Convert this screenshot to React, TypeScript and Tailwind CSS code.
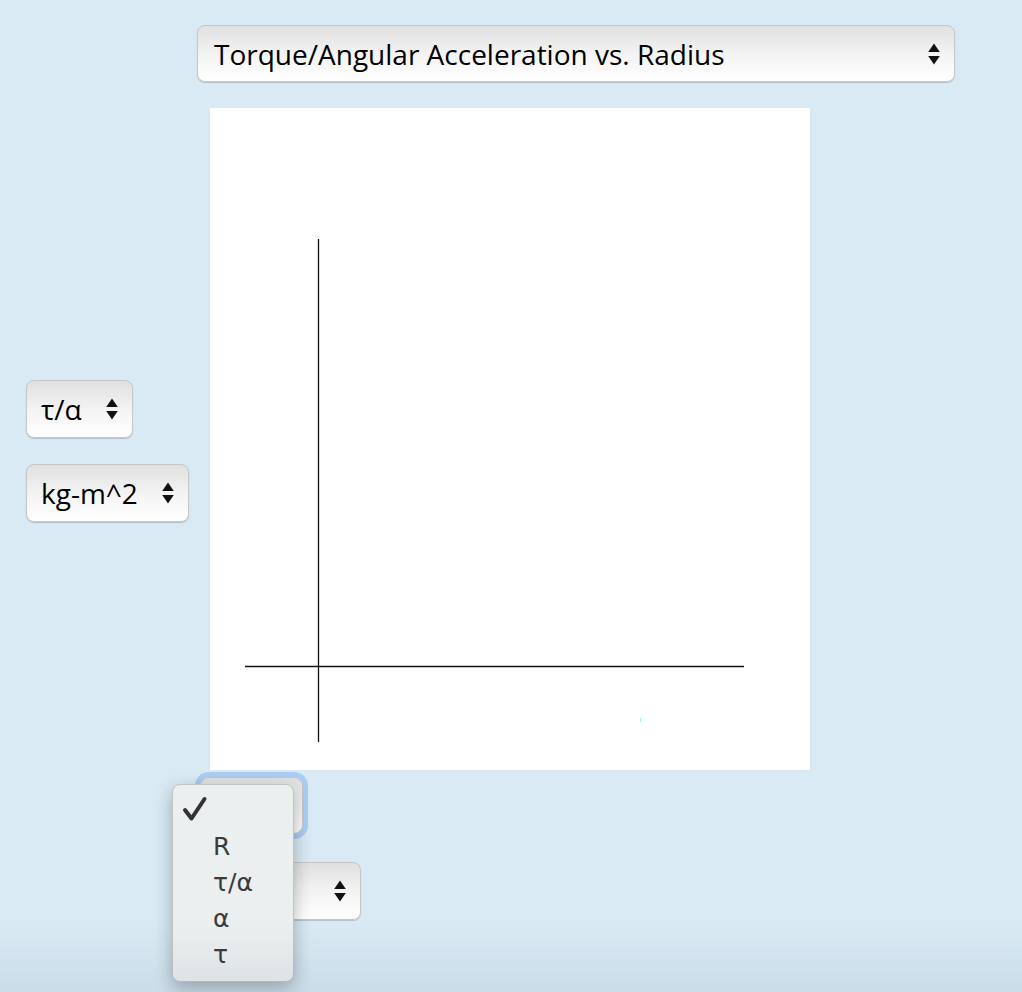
import React from "react";

function Arrows({ className = "" }: { className?: string }) {
  return (
    <svg width="12" height="22" viewBox="0 0 12 22" className={className}>
      <polygon points="6,0.5 11.8,9 0.2,9" fill="#111" />
      <polygon points="0.2,13 11.8,13 6,21.5" fill="#111" />
    </svg>
  );
}

function Select({
  label,
  className = "",
  textClass = "pl-[14px]",
}: {
  label?: string;
  className?: string;
  textClass?: string;
}) {
  return (
    <div
      className={
        "flex shrink-0 items-center justify-between rounded-[8px] border border-[#c6c6c6] bg-gradient-to-b from-[#e0e0e0] via-[#f3f3f3] to-white shadow-[0_1px_1px_rgba(0,0,0,0.18)] pr-[14px] " +
        className
      }
    >
      <span className={"text-[28px] leading-none text-black " + textClass}>{label}</span>
      <Arrows />
    </div>
  );
}

export default function App() {
  return (
    <div className="relative min-h-[992px] w-[1022px] overflow-hidden bg-[#d9eaf4] font-['Open_Sans',sans-serif]">
      {/* chart picker */}
      <div className="pl-[197px] pt-[25px]">
        <Select
          label="Torque/Angular Acceleration vs. Radius"
          className="h-[57px] w-[758px]"
          textClass="pl-[16px]"
        />
      </div>

      <div className="mt-[26px] flex">
        {/* y-axis controls */}
        <div className="flex w-[210px] shrink-0 flex-col items-start gap-[26px] pl-[26px] pt-[272px]">
          <Select label="τ/α" className="h-[58px] w-[107px]" />
          <Select label="kg-m^2" className="h-[58px] w-[163px]" />
        </div>

        {/* plot area */}
        <div className="h-[662px] w-[600px] shrink-0 bg-white">
          <svg width="600" height="662" viewBox="0 0 600 662">
            <line x1="108.5" y1="131" x2="108.5" y2="634" stroke="#111" strokeWidth="1.3" />
            <line x1="35" y1="558.5" x2="534" y2="558.5" stroke="#111" strokeWidth="1.3" />
            <rect x="430" y="610" width="1.2" height="4" fill="#7fffff" />
          </svg>
        </div>
      </div>

      {/* x-axis controls */}
      <div className="flex flex-col items-start pl-[200px] pt-[7px]">
        <div className="h-[57px] w-[103px] rounded-[9px] border border-[#c6c6c6] bg-gradient-to-b from-[#e0e0e0] via-[#f2f2f2] to-white ring-[5px] ring-[#a9cdf3]" />
        <Select className="ml-[-2px] mt-[28px] h-[58px] w-[163px]" />
      </div>

      {/* open option menu */}
      <div className="absolute left-[172px] top-[784px] h-[198px] w-[122px] rounded-[8px] border border-[#bfc4c6] bg-[#ebeff0] shadow-[0_6px_18px_rgba(0,0,0,0.28)] font-['DejaVu_Sans',sans-serif] text-[#3a3a3a]">
        <svg
          width="26"
          height="28"
          viewBox="0 0 26 28"
          className="absolute left-[9px] top-[10px]"
        >
          <path
            d="M3 15 L9.5 23.5 L22.5 4"
            fill="none"
            stroke="#333"
            strokeWidth="4"
            strokeLinecap="round"
            strokeLinejoin="round"
          />
        </svg>
        <div className="flex flex-col pl-[40px] pt-[44px] text-[25px] leading-[36px]">
          <span>R</span>
          <span>τ/α</span>
          <span>α</span>
          <span>τ</span>
        </div>
      </div>

      {/* dim band along the lower edge */}
      <div className="pointer-events-none absolute bottom-0 left-0 h-[70px] w-full bg-gradient-to-b from-transparent to-[rgba(0,40,70,0.07)]" />
    </div>
  );
}
